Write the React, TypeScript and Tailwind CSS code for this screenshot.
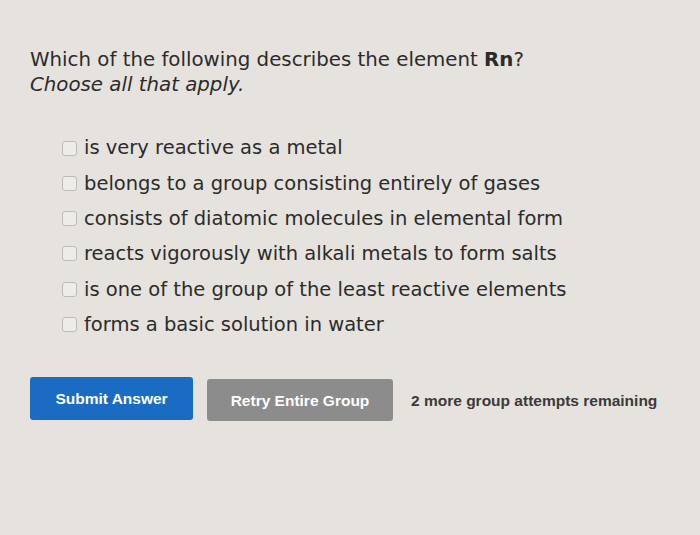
const options = [
  "is very reactive as a metal",
  "belongs to a group consisting entirely of gases",
  "consists of diatomic molecules in elemental form",
  "reacts vigorously with alkali metals to form salts",
  "is one of the group of the least reactive elements",
  "forms a basic solution in water",
];

export default function App() {
  return (
    <div className="h-[535px] w-[700px] overflow-hidden bg-[#e6e3de] font-['DejaVu_Sans',sans-serif] text-[#2b2b2b]">
      <div className="px-[30px] pt-[47px]">
        <p className="text-[19.8px] leading-[25px]">
          Which of the following describes the element <b>Rn</b>?
        </p>
        <p className="text-[19.8px] italic leading-[25px]">Choose all that apply.</p>

        <ul className="mt-[39px] flex flex-col gap-[11.3px] pl-[32px]">
          {options.map((o) => (
            <li key={o} className="flex h-[24px] items-center gap-[7px] text-[19.5px]">
              <span className="h-[15px] w-[15px] shrink-0 rounded-[3px] border border-[#bdbbb6] bg-[#eeece8]" />
              <span>{o}</span>
            </li>
          ))}
        </ul>

        <div className="mt-[39px] flex items-center font-['Liberation_Sans',sans-serif] text-[15.5px] font-bold">
          <button className="h-[43px] w-[163px] rounded-[3px] bg-[#1a6cc2] text-white">
            Submit Answer
          </button>
          <button className="ml-[14px] mt-[4px] h-[42px] w-[186px] rounded-[3px] bg-[#8c8c8c] text-white">
            Retry Entire Group
          </button>
          <span className="ml-[18px] mt-[4px] text-[#3a3a3a]">2 more group attempts remaining</span>
        </div>
      </div>
    </div>
  );
}
